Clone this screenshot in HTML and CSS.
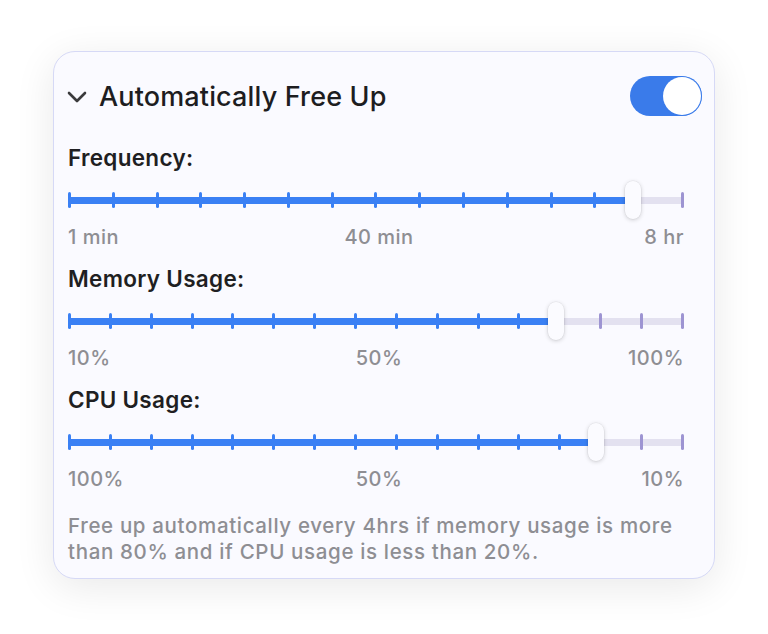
FILE: index.html
```html
<!DOCTYPE html>
<html>
<head>
<meta charset="utf-8">
<link rel="stylesheet" href="styles.css">
</head>
<body>
<div class="card">
  <div class="header">
    <div class="title-wrap">
      <svg class="chevron" width="20" height="12" viewBox="0 0 20 12"><path d="M2 2 L10 10 L18 2" fill="none" stroke="#3a3a3c" stroke-width="2.6" stroke-linecap="round" stroke-linejoin="round"/></svg>
      <span class="title">Automatically Free Up</span>
    </div>
    <div class="toggle"><div class="knob"></div></div>
  </div>

  <div class="section first">
    <div class="label">Frequency:</div>
    <div class="slider">
      <div class="track"></div>
      <div class="fill" style="width:91.7%"></div>
      <div class="ticks">
        <i class="on"></i><i class="on"></i><i class="on"></i><i class="on"></i><i class="on"></i><i class="on"></i><i class="on"></i><i class="on"></i><i class="on"></i><i class="on"></i><i class="on"></i><i class="on"></i><i class="on"></i><i class="on"></i><i></i>
      </div>
      <div class="thumb" style="left:91.7%"></div>
    </div>
    <div class="scale"><span class="lo">1 min</span><span class="mid">40 min</span><span class="hi">8 hr</span></div>
  </div>

  <div class="section">
    <div class="label">Memory Usage:</div>
    <div class="slider">
      <div class="track"></div>
      <div class="fill" style="width:79.2%"></div>
      <div class="ticks">
        <i class="on"></i><i class="on"></i><i class="on"></i><i class="on"></i><i class="on"></i><i class="on"></i><i class="on"></i><i class="on"></i><i class="on"></i><i class="on"></i><i class="on"></i><i class="on"></i><i></i><i></i><i></i><i></i>
      </div>
      <div class="thumb" style="left:79.2%"></div>
    </div>
    <div class="scale"><span class="lo">10%</span><span class="mid">50%</span><span class="hi">100%</span></div>
  </div>

  <div class="section">
    <div class="label">CPU Usage:</div>
    <div class="slider">
      <div class="track"></div>
      <div class="fill" style="width:85.7%"></div>
      <div class="ticks">
        <i class="on"></i><i class="on"></i><i class="on"></i><i class="on"></i><i class="on"></i><i class="on"></i><i class="on"></i><i class="on"></i><i class="on"></i><i class="on"></i><i class="on"></i><i class="on"></i><i class="on"></i><i></i><i></i><i></i>
      </div>
      <div class="thumb" style="left:85.7%"></div>
    </div>
    <div class="scale"><span class="lo">100%</span><span class="mid">50%</span><span class="hi">10%</span></div>
  </div>

  <p class="desc">Free up automatically every 4hrs if memory usage is more than 80% and if CPU usage is less than 20%.</p>
</div>
</body>
</html>
```

FILE: styles.css
```css
html, body {
  margin: 0;
  padding: 0;
  background: #ffffff;
}
body {
  width: 768px;
  height: 634px;
  overflow: hidden;
  font-family: Inter, "Noto Sans", sans-serif;
  padding-top: 51px;
  padding-left: 53px;
  box-sizing: border-box;
}
.card {
  width: 662px;
  box-sizing: border-box;
  background: #fafaff;
  border: 1px solid #d6d9f6;
  border-radius: 22px;
  padding: 24px 12px 13px 14px;
  box-shadow: 0 8px 40px rgba(0, 0, 0, 0.09);
}
.header {
  display: flex;
  align-items: center;
  justify-content: space-between;
  height: 40px;
}
.title-wrap {
  display: flex;
  align-items: center;
  gap: 12px;
}
.chevron {
  display: block;
  margin-left: -1px;
  margin-top: 2px;
}
.title {
  font-size: 27px;
  font-weight: 500;
  color: #1d1d1f;
  letter-spacing: 0.15px;
}
.toggle {
  width: 72px;
  height: 40px;
  border-radius: 20px;
  background: #3a7bea;
  display: flex;
  align-items: center;
  justify-content: flex-end;
  padding: 0 1px;
  box-sizing: border-box;
}
.knob {
  width: 38px;
  height: 38px;
  border-radius: 50%;
  background: #ffffff;
  box-shadow: 0 0 0 1px rgba(58, 123, 234, 0.6);
}
.section {
  margin-right: 18px;
  margin-top: 19px;
}
.section.first {
  margin-top: 30px;
}
.label {
  font-size: 22.5px;
  line-height: 24px;
  font-weight: 600;
  color: #1f1f22;
  letter-spacing: 0.3px;
  margin-bottom: 11px;
}
.slider {
  position: relative;
  height: 38px;
  display: flex;
  align-items: center;
}
.track {
  position: absolute;
  left: 0;
  right: 0;
  top: 16px;
  height: 7px;
  border-radius: 3px;
  background: #e3e1f0;
}
.fill {
  position: absolute;
  left: 0;
  top: 16px;
  height: 7px;
  border-radius: 3px 0 0 3px;
  background: #3a80f4;
}
.ticks {
  position: relative;
  flex: 1;
  display: flex;
  justify-content: space-between;
  align-items: center;
}
.ticks i {
  display: block;
  width: 3px;
  height: 16px;
  border-radius: 1.5px;
  background: #9d94d2;
}
.ticks i.on {
  background: #3a80f4;
}
.thumb {
  position: absolute;
  top: 0;
  width: 16px;
  height: 38px;
  margin-left: -8px;
  border-radius: 8px;
  background: #fbfbff;
  box-shadow: 0 1px 4px rgba(0, 0, 0, 0.18), 0 0 0 0.5px rgba(0, 0, 0, 0.06);
}
.scale {
  display: grid;
  grid-template-columns: 1fr auto 1fr;
  margin-top: 7px;
  font-size: 20px;
  line-height: 22px;
  font-weight: 500;
  letter-spacing: 0.5px;
  color: #8e8e93;
}
.scale .lo {
  justify-self: start;
}
.scale .mid {
  margin-left: 6px;
}
.scale .hi {
  justify-self: end;
}
.desc {
  margin: 23px 10px 0 0;
  font-size: 20.5px;
  line-height: 26px;
  font-weight: 500;
  letter-spacing: 0.65px;
  color: #8e8e93;
}
```
